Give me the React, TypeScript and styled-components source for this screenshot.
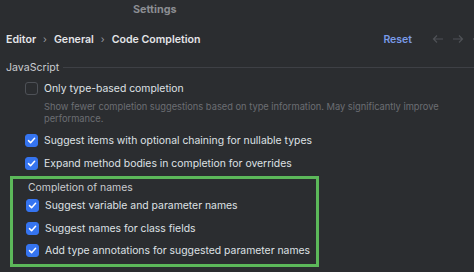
import styled, {createGlobalStyle} from 'styled-components';

const GlobalStyle = createGlobalStyle`
    html, body {
        margin: 0;
        padding: 0;
        background: #2b2d30;
        overflow: hidden;
    }
    body {
        font-family: Inter, "Noto Sans", sans-serif;
        -webkit-font-smoothing: antialiased;
    }
`;

const Window = styled.div`
    width: 474px;
    height: 272px;
    background: #2b2d30;
    color: #dfe1e5;
    display: flex;
    flex-direction: column;
    overflow: hidden;
`;

const TitleBar = styled.div`
    height: 19px;
    padding-left: 133px;
    font-size: 10.8px;
    font-weight: 700;
    color: #8c8e93;
    line-height: 19px;
`;

const Header = styled.div`
    display: flex;
    align-items: center;
    height: 20px;
    margin-top: 10px;
    padding-left: 6px;
`;

const Crumb = styled.span`
    font-size: 10.6px;
    font-weight: 600;
    color: #e4e5e8;
`;

const Chevron = styled.span`
    font-size: 10px;
    color: #9a9ca1;
    margin: 0 7px;
`;

const ResetLink = styled.span`
    margin-left: auto;
    font-size: 10.5px;
    font-weight: 600;
    color: #7a9be8;
`;

const NavArrows = styled.div`
    display: flex;
    align-items: center;
    gap: 8px;
    margin-left: 20px;
    margin-right: -10px;
`;

const SectionHeader = styled.div`
    display: flex;
    align-items: center;
    gap: 4px;
    margin-top: 10px;
    padding-left: 6px;
    font-size: 10.6px;
    color: #c9cbcf;
    height: 16px;
`;

const Rule = styled.div`
    flex: 1;
    height: 1px;
    background: #3e4045;
`;

const Options = styled.div`
    display: flex;
    flex-direction: column;
    padding-left: 25px;
    padding-top: 6px;
`;

const OptionRow = styled.label<{$gap?: number}>`
    display: flex;
    align-items: center;
    gap: 6px;
    height: 15px;
    margin-bottom: ${p => p.$gap ?? 8}px;
    font-size: 10.4px;
    color: #dfe1e5;
    white-space: nowrap;
`;

const Box = styled.span<{$checked: boolean}>`
    width: 13px;
    height: 13px;
    box-sizing: border-box;
    border-radius: 3px;
    flex-shrink: 0;
    display: flex;
    align-items: center;
    justify-content: center;
    background: ${p => (p.$checked ? '#3574f0' : 'transparent')};
    border: 1px solid ${p => (p.$checked ? '#3574f0' : '#4e5157')};
`;

const Hint = styled.div`
    padding-left: 19px;
    margin-bottom: 8.5px;
    font-size: 9.3px;
    line-height: 12px;
    color: #6c6e73;
    width: 412px;
`;

const Highlight = styled.div`
    margin: 4.5px 0 0 10px;
    width: 309px;
    height: 91px;
    box-sizing: border-box;
    border: 3px solid #5cb85a;
    padding: 1px 0 0 13px;
    display: flex;
    flex-direction: column;
`;

const GroupTitle = styled.div`
    font-size: 10.4px;
    line-height: 15px;
    color: #c9cbcf;
    height: 15px;
    margin-bottom: 3.5px;
    margin-left: 2px;
`;

function Checkbox({checked}: {checked: boolean}) {
    return (
        <Box $checked={checked}>
            {checked && (
                <svg width="9" height="9" viewBox="0 0 9 9">
                    <path d="M1.5 4.6 L3.6 6.7 L7.6 2.2" fill="none" stroke="#fff" strokeWidth="1.5" strokeLinecap="round" strokeLinejoin="round" />
                </svg>
            )}
        </Box>
    );
}

function Arrow({dir}: {dir: 'left' | 'right'}) {
    return (
        <svg width="12" height="10" viewBox="0 0 12 10">
            {dir === 'left' ? (
                <path d="M11 5 H1.5 M5 1.5 L1.5 5 L5 8.5" fill="none" stroke="#4f5156" strokeWidth="1.2" />
            ) : (
                <path d="M1 5 H10.5 M7 1.5 L10.5 5 L7 8.5" fill="none" stroke="#4f5156" strokeWidth="1.2" />
            )}
        </svg>
    );
}

export default function App() {
    return (
        <>
            <GlobalStyle />
            <Window>
                <TitleBar>Settings</TitleBar>
                <Header>
                    <Crumb>Editor</Crumb>
                    <Chevron>›</Chevron>
                    <Crumb>General</Crumb>
                    <Chevron>›</Chevron>
                    <Crumb>Code Completion</Crumb>
                    <ResetLink>Reset</ResetLink>
                    <NavArrows>
                        <Arrow dir="left" />
                        <Arrow dir="right" />
                        <Arrow dir="left" />
                    </NavArrows>
                </Header>
                <SectionHeader>
                    JavaScript
                    <Rule />
                </SectionHeader>
                <Options>
                    <OptionRow $gap={4.5}>
                        <Checkbox checked={false} />
                        Only type-based completion
                    </OptionRow>
                    <Hint>
                        Show fewer completion suggestions based on type information. May significantly improve performance.
                    </Hint>
                    <OptionRow>
                        <Checkbox checked />
                        Suggest items with optional chaining for nullable types
                    </OptionRow>
                    <OptionRow $gap={0}>
                        <Checkbox checked />
                        Expand method bodies in completion for overrides
                    </OptionRow>
                </Options>
                <Highlight>
                    <GroupTitle>Completion of names</GroupTitle>
                    <OptionRow $gap={7.5}>
                        <Checkbox checked />
                        Suggest variable and parameter names
                    </OptionRow>
                    <OptionRow $gap={7.5}>
                        <Checkbox checked />
                        Suggest names for class fields
                    </OptionRow>
                    <OptionRow $gap={0}>
                        <Checkbox checked />
                        Add type annotations for suggested parameter names
                    </OptionRow>
                </Highlight>
            </Window>
        </>
    );
}
